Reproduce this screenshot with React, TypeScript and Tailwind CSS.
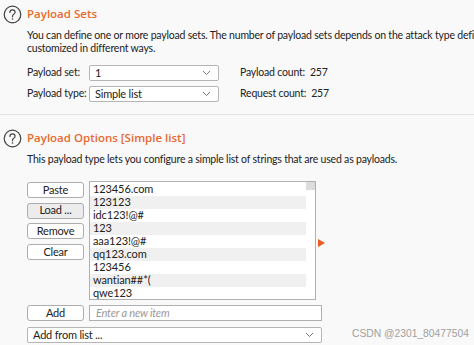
import React from "react";

const font = { fontFamily: 'Lato, "Noto Sans", sans-serif' };

function HelpIcon() {
  return (
    <svg width="19" height="19" viewBox="0 0 19 19" className="shrink-0">
      <circle cx="9.5" cy="9.5" r="8.3" fill="none" stroke="#444" strokeWidth="1.2" />
      <path d="M6.9 7.4c0-1.5 1.2-2.5 2.6-2.5s2.6 1 2.6 2.3c0 1.2-0.8 1.7-1.6 2.3-0.7 0.5-1 0.9-1 1.8v0.5" fill="none" stroke="#444" strokeWidth="1.2" strokeLinecap="round" />
      <circle cx="9.5" cy="14" r="0.8" fill="#444" />
    </svg>
  );
}

function Chevron() {
  return (
    <svg width="9" height="6" viewBox="0 0 9 6" className="shrink-0">
      <path d="M1 1l3.5 3.5L8 1" fill="none" stroke="#777" strokeWidth="1" />
    </svg>
  );
}

function Select({ value, w }: { value: string; w: string }) {
  return (
    <div className={`flex items-center justify-between h-[16px] ${w} bg-white border border-[#b5b5b5] rounded-[2px] pl-[5px] pr-[7px] text-[11px] tracking-[-0.2px] text-[#222]`}>
      <span className="whitespace-nowrap">{value}</span>
      <Chevron />
    </div>
  );
}

function Btn({ label, active }: { label: string; active?: boolean }) {
  return (
    <div className={`flex items-center justify-center w-[57px] h-[16px] border border-[#adadad] rounded-[3px] text-[11px] tracking-[-0.2px] text-[#222] whitespace-nowrap ${active ? "bg-[#ececec]" : "bg-white"}`}>
      {label}
    </div>
  );
}

const items = [
  "123456.com",
  "123123",
  "idc123!@#",
  "123",
  "aaa123!@#",
  "qq123.com",
  "123456",
  "wantian##*(",
  "qwe123",
];

const body = "text-[10.5px] tracking-[-0.2px]";
const title = "text-[11.5px] font-semibold text-[#e8692f] leading-none whitespace-nowrap";
const titleFont = { fontFamily: '"Open Sans", sans-serif' };

export default function App() {
  return (
    <div className="relative w-[474px] h-[345px] overflow-hidden bg-[#f9f9f9] text-[#222]" style={font}>
      {/* Section 1 */}
      <div className="flex items-center gap-[5px] pl-[3px] pt-[4px] h-[24px]">
        <HelpIcon />
        <span className={title} style={titleFont}>Payload Sets</span>
      </div>
      <div className={`pl-[27px] pt-[5px] ${body} leading-[13px] whitespace-nowrap`}>
        <div>You can define one or more payload sets. The number of payload sets depends on the attack type defined in the Positions tab.</div>
        <div>customized in different ways.</div>
      </div>
      <div className="flex pl-[27px] pt-[10px]">
        <div className="flex flex-col gap-[5px]">
          <div className="flex items-center h-[16px]">
            <span className={`w-[62px] ${body} whitespace-nowrap`}>Payload set:</span>
            <Select value="1" w="w-[130px]" />
          </div>
          <div className="flex items-center h-[16px]">
            <span className={`w-[62px] ${body} whitespace-nowrap`}>Payload type:</span>
            <Select value="Simple list" w="w-[130px]" />
          </div>
        </div>
        <div className={`flex flex-col gap-[5px] pl-[21px] ${body} whitespace-nowrap`}>
          <div className="h-[16px] flex items-center">Payload count:&nbsp; 257</div>
          <div className="h-[16px] flex items-center">Request count:&nbsp; 257</div>
        </div>
      </div>
      <div className="mt-[12px] h-px bg-[#e4e4e4]" />

      {/* Section 2 */}
      <div className="flex items-center gap-[5px] pl-[3px] pt-[13px] h-[33px]">
        <HelpIcon />
        <span className={title} style={titleFont}>Payload Options [Simple list]</span>
      </div>
      <div className={`pl-[27px] pt-[5px] ${body} leading-[13px] whitespace-nowrap`}>
        This payload type lets you configure a simple list of strings that are used as payloads.
      </div>

      <div className="flex pl-[27px] pt-[15px]">
        <div className="flex flex-col gap-[4.6px] pt-[1px]">
          <Btn label="Paste" />
          <Btn label="Load ..." active />
          <Btn label="Remove" />
          <Btn label="Clear" />
        </div>
        <div className="ml-[5px] flex w-[227px] h-[119px] bg-white border border-[#b0b0b0]">
          <div className="flex-1 flex flex-col pt-px">
            {items.map((it, i) => (
              <div
                key={it}
                className={`h-[13px] flex items-center pl-[3px] text-[11px] tracking-[-0.1px] whitespace-nowrap ${i % 2 === 1 ? "bg-[#f0f0f0]" : ""}`}
              >
                {it}
              </div>
            ))}
          </div>
          <div className="w-[9px] flex flex-col">
            <div className="h-[8px] bg-[#dcdcdc]" />
          </div>
        </div>
        <div className="flex items-start pt-[58px] pl-[2px]">
          <svg width="7" height="8" viewBox="0 0 7 8">
            <path d="M0 0L7 4L0 8Z" fill="#ee5a24" />
          </svg>
        </div>
      </div>

      <div className="flex pl-[27px] pt-[5px] gap-[5px]">
        <Btn label="Add" />
        <div className="flex items-center w-[233px] h-[16px] bg-white border border-[#b0b0b0] pl-[6px] text-[11px] tracking-[-0.2px] italic text-[#9a9a9a] whitespace-nowrap">
          Enter a new item
        </div>
      </div>
      <div className="flex pl-[27px] pt-[6px]">
        <Select value="Add from list ..." w="w-[295px]" />
      </div>

      <div className="absolute left-[352px] top-[327px] text-[10.3px] leading-[13px] text-[#a0a0a0] whitespace-nowrap" style={{ fontFamily: '"Liberation Sans", Arial, sans-serif' }}>
        CSDN @2301_80477504
      </div>
    </div>
  );
}
